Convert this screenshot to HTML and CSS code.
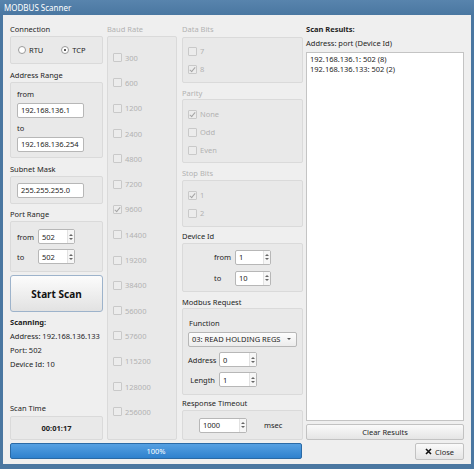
FILE: index.html
```html
<!DOCTYPE html>
<html lang="en">
<head>
    <meta charset="UTF-8">
    <meta name="viewport" content="width=device-width, initial-scale=1.0">
    <title>MODBUS Scanner</title>
    <link rel="stylesheet" href="styles.css">
</head>
<body>
    <div class="window">
        <div class="titlebar">MODBUS Scanner</div>
        <div class="client">
            <div class="main">
                <!-- connection settings -->
                <div class="col left">
                    <div class="lbl">Connection</div>
                    <div class="group conn">
                        <span class="radio"></span><span>RTU</span>
                        <span class="radio on"></span><span>TCP</span>
                    </div>
                    <div class="lbl gap5">Address Range</div>
                    <div class="group addr">
                        <div class="lbl">from</div>
                        <div class="input">192.168.136.1</div>
                        <div class="lbl">to</div>
                        <div class="input">192.168.136.254</div>
                    </div>
                    <div class="lbl gap5">Subnet Mask</div>
                    <div class="group subnet">
                        <div class="input">255.255.255.0</div>
                    </div>
                    <div class="lbl gap4">Port Range</div>
                    <div class="group ports">
                        <div class="row">
                            <span class="rl">from</span>
                            <div class="spin w37"><span>502</span><span class="arrows"><i class="up"></i><i class="down"></i></span></div>
                        </div>
                        <div class="row">
                            <span class="rl">to</span>
                            <div class="spin w37"><span>502</span><span class="arrows"><i class="up"></i><i class="down"></i></span></div>
                        </div>
                    </div>
                    <button class="start">Start Scan</button>
                    <div class="info">
                        <div class="bold">Scanning:</div>
                        <div>Address: 192.168.136.133</div>
                        <div>Port: 502</div>
                        <div>Device Id: 10</div>
                    </div>
                    <div class="lbl push">Scan Time</div>
                    <div class="group time">00:01:17</div>
                </div>

                <!-- baud rate (disabled in TCP mode) -->
                <div class="col baud">
                    <div class="lbl off">Baud Rate</div>
                    <div class="group bauds" id="bauds"></div>
                </div>

                <div class="col mid">
                    <div class="lbl off">Data Bits</div>
                    <div class="group databits">
                        <div class="check off"><span class="cb"></span>7</div>
                        <div class="check off"><span class="cb checked"></span>8</div>
                    </div>
                    <div class="lbl off gap4">Parity</div>
                    <div class="group parity">
                        <div class="check off"><span class="cb checked"></span>None</div>
                        <div class="check off"><span class="cb"></span>Odd</div>
                        <div class="check off"><span class="cb"></span>Even</div>
                    </div>
                    <div class="lbl off gap4">Stop Bits</div>
                    <div class="group stopbits">
                        <div class="check off"><span class="cb checked"></span>1</div>
                        <div class="check off"><span class="cb"></span>2</div>
                    </div>
                    <div class="lbl gap3">Device Id</div>
                    <div class="group devid">
                        <div class="row">
                            <span class="rl">from</span>
                            <div class="spin w36"><span>1</span><span class="arrows"><i class="up"></i><i class="down"></i></span></div>
                        </div>
                        <div class="row">
                            <span class="rl">to</span>
                            <div class="spin w36"><span>10</span><span class="arrows"><i class="up"></i><i class="down"></i></span></div>
                        </div>
                    </div>
                    <div class="lbl gap4">Modbus Request</div>
                    <div class="group request">
                        <div class="lbl">Function</div>
                        <div class="combo">03: READ HOLDING REGS<i class="drop"></i></div>
                        <div class="row">
                            <span class="rr">Address</span>
                            <div class="spin w38"><span>0</span><span class="arrows"><i class="up"></i><i class="down"></i></span></div>
                        </div>
                        <div class="row">
                            <span class="rr">Length</span>
                            <div class="spin w38"><span>1</span><span class="arrows"><i class="up"></i><i class="down"></i></span></div>
                        </div>
                    </div>
                    <div class="lbl gap2">Response Timeout</div>
                    <div class="group timeout">
                        <div class="spin w48"><span>1000</span><span class="arrows"><i class="up"></i><i class="down"></i></span></div>
                        <span class="unit">msec</span>
                    </div>
                </div>

                <div class="col results">
                    <div class="lbl bold">Scan Results:</div>
                    <div class="lbl sub">Address: port (Device Id)</div>
                    <div class="list">
                        <div>192.168.136.1: 502 (8)</div>
                        <div>192.168.136.133: 502 (2)</div>
                    </div>
                    <button class="btn clear">Clear Results</button>
                </div>
            </div>

            <div class="bottom">
                <div class="progress">100%</div>
                <button class="btn close">
                    <svg width="7" height="7" viewBox="0 0 7 7"><path d="M1 1 L6 6 M6 1 L1 6" stroke="#111" stroke-width="1.6"/></svg>
                    Close
                </button>
            </div>
        </div>
    </div>
    <script>
        const rates = [300, 600, 1200, 2400, 4800, 7200, 9600, 14400, 19200, 38400, 56000, 57600, 115200, 128000, 256000];
        const bauds = document.getElementById('bauds');
        rates.forEach(rate => {
            const item = document.createElement('div');
            item.className = 'check off baudrow';
            item.innerHTML = '<span class="cb' + (rate === 9600 ? ' checked' : '') + '"></span>' + rate;
            bauds.appendChild(item);
        });
    </script>
</body>
</html>
```

FILE: styles.css
```css
* {
    box-sizing: border-box;
}

body {
    margin: 0;
    font-family: 'Noto Sans', 'Open Sans', sans-serif;
    font-size: 7.5px;
    color: #1e1e1e;
}

.window {
    width: 474px;
    height: 469px;
    background: #4a77a1;
    padding: 0 3px 5px 3px;
    display: flex;
    flex-direction: column;
}

.titlebar {
    height: 15px;
    line-height: 15px;
    margin: 0 -3px;
    padding-left: 4px;
    color: #fff;
    font-size: 8px;
    background: linear-gradient(#5884ad, #4a77a1);
}

.client {
    flex: 1;
    background: #efefef;
    padding: 8px 7px 4px 7px;
    display: flex;
    flex-direction: column;
}

.main {
    height: 417px;
    display: flex;
}

.col {
    display: flex;
    flex-direction: column;
}

.left { width: 93px; }
.baud { width: 70px; margin-left: 4px; }
.mid { width: 121px; margin-left: 5px; }
.results { width: 158px; margin-left: 3px; }

.lbl {
    height: 12px;
    line-height: 12px;
    white-space: nowrap;
}

.gap2 { margin-top: 2px; }
.gap3 { margin-top: 3px; }
.gap4 { margin-top: 4px; }
.gap5 { margin-top: 5px; }

.off {
    color: #b2b2b2;
}

.bold {
    font-weight: bold;
}

.group {
    background: #e9e9e9;
    border: 1px solid #dadada;
    border-radius: 2px;
    margin-top: 1px;
}

/* left column */
.conn {
    height: 28px;
    display: flex;
    align-items: center;
    padding-left: 7px;
}

.radio {
    width: 8px;
    height: 8px;
    border: 1px solid #9a9a9a;
    border-radius: 50%;
    background: #fff;
    margin-right: 3px;
    position: relative;
}

.radio.on::after {
    content: '';
    position: absolute;
    left: 2px;
    top: 2px;
    width: 2px;
    height: 2px;
    border-radius: 50%;
    background: #222;
}

.conn span + .radio {
    margin-left: 18px;
}

.addr {
    height: 76px;
    padding: 5px 6px 0 6px;
}

.addr .lbl + .input {
    margin-top: 3px;
}

.addr .input + .lbl {
    margin-top: 4px;
}

.input {
    width: 67px;
    height: 15px;
    line-height: 13px;
    background: #fff;
    border: 1px solid #b7b7b7;
    border-radius: 2px;
    padding-left: 3px;
}

.subnet {
    height: 28px;
    padding: 6px 6px 0 6px;
}

.ports {
    height: 51px;
    padding: 7px 0 0 6px;
}

.row {
    display: flex;
    align-items: center;
    height: 15px;
}

.row + .row {
    margin-top: 5px;
}

.ports .rl {
    width: 21px;
}

.spin {
    height: 15px;
    background: #fff;
    border: 1px solid #b7b7b7;
    border-radius: 2px;
    display: flex;
    align-items: center;
    justify-content: space-between;
    padding-left: 3px;
}

.w36 { width: 36px; }
.w37 { width: 37px; }
.w38 { width: 38px; }
.w48 { width: 48px; }

.arrows {
    width: 7px;
    height: 13px;
    border-left: 1px solid #e2e2e2;
    background: #f6f6f6;
    display: flex;
    flex-direction: column;
    align-items: center;
    justify-content: center;
    gap: 2px;
}

.arrows i {
    width: 0;
    height: 0;
    border-left: 2px solid transparent;
    border-right: 2px solid transparent;
}

.arrows .up { border-bottom: 2px solid #666; }
.arrows .down { border-top: 2px solid #666; }

.start {
    margin-top: 3px;
    height: 37px;
    font-family: inherit;
    font-size: 10px;
    font-weight: bold;
    color: #111;
    background: linear-gradient(#fcfcfc, #e2e2e2);
    border: 1px solid #9db3cb;
    border-radius: 3px;
}

.info {
    margin-top: 3px;
    line-height: 14px;
}

.push {
    margin-top: auto;
}

.time {
    margin-top: 2px;
    height: 24px;
    line-height: 22px;
    text-align: center;
    font-weight: bold;
}

/* checkboxes */
.bauds {
    flex: 1;
    padding: 8px 0 0 5px;
}

.check {
    display: flex;
    align-items: center;
    height: 18px;
}

.baudrow {
    height: 25.3px;
}

.cb {
    width: 9px;
    height: 9px;
    border: 1px solid #c9c9c9;
    border-radius: 1px;
    background: #ececec;
    margin-right: 3px;
    position: relative;
}

.cb.checked::after {
    content: '';
    position: absolute;
    left: 2px;
    top: 0px;
    width: 2px;
    height: 5px;
    border-right: 1px solid #a5a5a5;
    border-bottom: 1px solid #a5a5a5;
    transform: rotate(40deg);
}

.databits {
    margin-top: 2px;
    height: 46px;
    padding: 4px 0 0 5px;
}

.parity {
    margin-top: 0;
    height: 64px;
    padding: 5px 0 0 5px;
}

.stopbits {
    height: 47px;
    padding: 5px 0 0 5px;
}

/* device id / request */
.devid {
    height: 49px;
    padding-top: 5px;
}

.devid .row {
    justify-content: center;
    height: 16px;
}

.devid .rl {
    width: 21px;
}

.request {
    margin-top: 0;
    height: 87px;
    padding: 8px 5px 0 5px;
}

.request .lbl {
    padding-left: 1px;
}

.combo {
    margin-top: 3px;
    height: 15px;
    line-height: 13px;
    background: linear-gradient(#fdfdfd, #ececec);
    border: 1px solid #b7b7b7;
    border-radius: 2px;
    padding-left: 3px;
    position: relative;
}

.drop {
    position: absolute;
    right: 5px;
    top: 5px;
    border-left: 2px solid transparent;
    border-right: 2px solid transparent;
    border-top: 2px solid #555;
}

.request .row {
    margin-top: 5px;
}

.rr {
    width: 27px;
    text-align: right;
    margin-right: 4px;
}

.timeout {
    flex: 1;
    display: flex;
    align-items: center;
    padding-left: 16px;
}

.unit {
    margin-left: 17px;
}

/* results */
.sub {
    margin-top: 2px;
}

.list {
    flex: 1;
    margin-top: 3px;
    background: #fff;
    border: 1px solid #c4c4c4;
    padding: 1px 3px;
    line-height: 10px;
}

.btn {
    font-family: inherit;
    font-size: 7.5px;
    color: #1e1e1e;
    background: linear-gradient(#fafafa, #e5e5e5);
    border: 1px solid #c2c2c2;
    border-radius: 2px;
    padding: 0;
}

.clear {
    margin-top: 3px;
    height: 16px;
}

.bottom {
    margin-top: 3px;
    height: 17px;
    display: flex;
}

.progress {
    width: 292px;
    height: 16px;
    line-height: 14px;
    text-align: center;
    color: #fff;
    background: linear-gradient(#55a0e2, #2f81cd);
    border: 1px solid #2a6aa6;
    border-radius: 2px;
}

.close {
    margin-left: auto;
    width: 49px;
    height: 17px;
    display: flex;
    align-items: center;
    justify-content: center;
    gap: 3px;
}
```
